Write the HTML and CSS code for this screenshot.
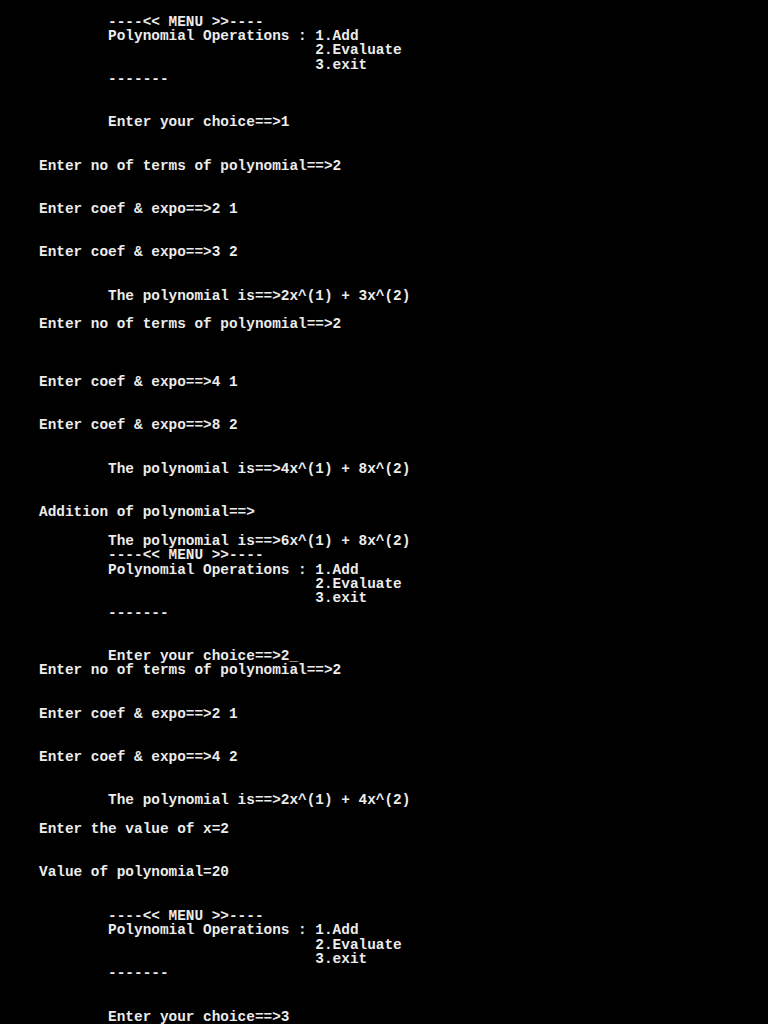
FILE: index.html
```html
<!DOCTYPE html>
<html>
<head>
<meta charset="utf-8">
<link rel="stylesheet" href="styles.css">
</head>
<body>
<pre class="console">        ----&lt;&lt; MENU &gt;&gt;----
        Polynomial Operations : 1.Add
                                2.Evaluate
                                3.exit
        -------


        Enter your choice==&gt;1


Enter no of terms of polynomial==&gt;2


Enter coef &amp; expo==&gt;2 1


Enter coef &amp; expo==&gt;3 2


        The polynomial is==&gt;2x^(1) + 3x^(2)

Enter no of terms of polynomial==&gt;2



Enter coef &amp; expo==&gt;4 1


Enter coef &amp; expo==&gt;8 2


        The polynomial is==&gt;4x^(1) + 8x^(2)


Addition of polynomial==&gt;

        The polynomial is==&gt;6x^(1) + 8x^(2)
        ----&lt;&lt; MENU &gt;&gt;----
        Polynomial Operations : 1.Add
                                2.Evaluate
                                3.exit
        -------


        Enter your choice==&gt;2_
Enter no of terms of polynomial==&gt;2


Enter coef &amp; expo==&gt;2 1


Enter coef &amp; expo==&gt;4 2


        The polynomial is==&gt;2x^(1) + 4x^(2)

Enter the value of x=2


Value of polynomial=20


        ----&lt;&lt; MENU &gt;&gt;----
        Polynomial Operations : 1.Add
                                2.Evaluate
                                3.exit
        -------


        Enter your choice==&gt;3</pre>
</body>
</html>
```
FILE: styles.css
```css
html, body {
  margin: 0;
  padding: 0;
  background: #000;
  height: 100%;
  overflow: hidden;
}

.console {
  margin: 0;
  padding: 14.5px 0 0 39px;
  font-family: "Liberation Mono", "DejaVu Sans Mono", monospace;
  font-weight: bold;
  font-size: 14.4px;
  line-height: 14.42px;
  color: #ececec;
  white-space: pre;
}
```
